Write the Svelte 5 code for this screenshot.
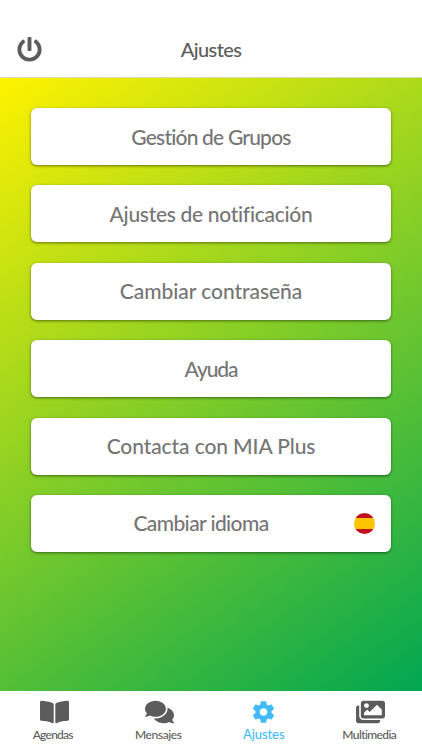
<script lang="ts">
  type Option = { label: string; tracking: number; flag?: boolean };
  type Tab = { label: string; tracking: number; icon: string; viewBox: string; active?: boolean };

  const options: Option[] = [
    { label: "Gestión de Grupos", tracking: -0.8 },
    { label: "Ajustes de notificación", tracking: -0.3 },
    { label: "Cambiar contraseña", tracking: -0.05 },
    { label: "Ayuda", tracking: -1.1 },
    { label: "Contacta con MIA Plus", tracking: -0.1 },
    { label: "Cambiar idioma", tracking: -0.6, flag: true },
  ];

  const tabs: Tab[] = [
    {
      label: "Agendas",
      tracking: -0.75,
      viewBox: "0 0 576 512",
      icon: "M542.22 32.05c-54.8 3.11-163.72 14.43-230.96 55.59-4.64 2.84-7.27 7.89-7.27 13.17v363.87c0 11.55 12.63 18.85 23.28 13.49 69.18-34.82 169.23-44.32 218.7-46.92 16.89-.89 30.02-14.43 30.02-30.66V62.75c.01-17.71-15.35-31.74-33.77-30.7zM264.73 87.64C197.5 46.48 88.58 35.17 33.78 32.05 15.36 31.01 0 45.04 0 62.75V400.6c0 16.24 13.13 29.78 30.02 30.66 49.49 2.6 149.59 12.11 218.77 46.95 10.62 5.35 23.21-1.94 23.21-13.46V100.63c0-5.29-2.62-10.14-7.27-12.99z",
    },
    {
      label: "Mensajes",
      tracking: -0.4,
      viewBox: "0 0 576 512",
      icon: "M416 192c0-88.4-93.1-160-208-160S0 103.6 0 192c0 34.3 14.1 65.9 38 92-13.4 30.2-35.5 54.2-35.8 54.5-2.2 2.3-2.8 5.7-1.5 8.7S4.8 352 8 352c36.6 0 66.9-12.3 88.7-25 32.2 15.7 70.3 25 111.3 25 114.9 0 208-71.6 208-160zm122 220c23.9-26 38-57.7 38-92 0-66.9-53.5-124.2-129.3-148.1.9 6.6 1.3 13.3 1.3 20.1 0 105.9-107.7 192-240 192-10.8 0-21.3-.8-31.7-1.9C207.8 439.6 281.8 480 368 480c41 0 79.1-9.2 111.3-25 21.8 12.7 52.1 25 88.7 25 3.2 0 6.1-1.9 7.3-4.8 1.3-2.9.7-6.3-1.5-8.7-.3-.3-22.4-24.2-35.8-54.5z",
    },
    {
      label: "Ajustes",
      tracking: -0.1,
      active: true,
      viewBox: "0 0 24 24",
      icon: "M19.43 12.98c.04-.32.07-.64.07-.98s-.03-.66-.07-.98l2.11-1.65c.19-.15.24-.42.12-.64l-2-3.46c-.12-.22-.39-.3-.61-.22l-2.49 1c-.52-.4-1.08-.73-1.69-.98l-.38-2.65C14.46 2.18 14.25 2 14 2h-4c-.25 0-.46.18-.49.42l-.38 2.65c-.61.25-1.17.59-1.69.98l-2.49-1c-.23-.09-.49 0-.61.22l-2 3.46c-.13.22-.07.49.12.64l2.11 1.65c-.04.32-.07.65-.07.98s.03.66.07.98l-2.11 1.65c-.19.15-.24.42-.12.64l2 3.46c.12.22.39.3.61.22l2.49-1c.52.4 1.08.73 1.69.98l.38 2.65c.03.24.24.42.49.42h4c.25 0 .46-.18.49-.42l.38-2.65c.61-.25 1.17-.59 1.69-.98l2.49 1c.23.09.49 0 .61-.22l2-3.46c.12-.22.07-.49-.12-.64l-2.11-1.65zM12 15.5c-1.93 0-3.5-1.57-3.5-3.5s1.57-3.5 3.5-3.5 3.5 1.57 3.5 3.5-1.57 3.5-3.5 3.5z",
    },
    {
      label: "Multimedia",
      tracking: -0.6,
      viewBox: "0 0 576 512",
      icon: "M480 416v16c0 26.51-21.49 48-48 48H48c-26.51 0-48-21.49-48-48V176c0-26.51 21.49-48 48-48h16v208c0 44.112 35.888 80 80 80h336zm96-80V80c0-26.51-21.49-48-48-48H144c-26.51 0-48 21.49-48 48v256c0 26.51 21.49 48 48 48h384c26.51 0 48-21.49 48-48zM256 128c0 26.51-21.49 48-48 48s-48-21.49-48-48 21.49-48 48-48 48 21.49 48 48zm-96 144l55.515-55.515c4.686-4.686 12.284-4.686 16.971 0L272 256l135.515-135.515c4.686-4.686 12.284-4.686 16.971 0L512 208v112H160v-48z",
    },
  ];
</script>

<div class="screen">
  <header>
    <button class="power" aria-label="Salir">
      <svg viewBox="0 0 512 512">
        <path d="M400 54.1c63 45 104 118.6 104 201.9 0 136.8-110.8 247.7-247.5 248C120 504.3 8.2 393 8 256.4 7.9 173.1 48.9 99.3 111.8 54.2c11.7-8.3 28-4.8 35 7.7L162.6 90c5.9 10.5 3.1 23.8-6.6 31-41.5 30.8-68 79.6-68 134.9-.1 92.3 74.5 168.1 168 168.1 91.6 0 168.6-74.2 168-169.1-.3-51.8-24.7-101.8-68.1-134-9.7-7.2-12.4-20.5-6.5-30.9l15.8-28.1c7-12.4 23.2-16.1 34.8-7.8zM296 264V24c0-13.3-10.7-24-24-24h-32c-13.3 0-24 10.7-24 24v240c0 13.3 10.7 24 24 24h32c13.3 0 24-10.7 24-24z" />
      </svg>
    </button>
    <h1>Ajustes</h1>
  </header>

  <main>
    {#each options as option}
      <button class="option" class:with-flag={option.flag}>
        <span style="letter-spacing: {option.tracking}px">{option.label}</span>
        {#if option.flag}
          <i class="flag"></i>
        {/if}
      </button>
    {/each}
  </main>

  <nav>
    {#each tabs as tab}
      <button class="tab" class:active={tab.active}>
        <svg viewBox={tab.viewBox}><path d={tab.icon} /></svg>
        <span style="letter-spacing: {tab.tracking}px">{tab.label}</span>
      </button>
    {/each}
  </nav>
</div>

<style>
  :global(body) {
    margin: 0;
  }
  .screen {
    display: flex;
    flex-direction: column;
    height: 750px;
    font-family: Lato, "Liberation Sans", sans-serif;
    color: #5c5c5c;
  }
  button {
    border: 0;
    padding: 0;
    background: none;
    font: inherit;
    color: inherit;
  }
  svg {
    display: block;
    fill: currentColor;
  }
  header {
    box-sizing: border-box;
    display: grid;
    grid-template-columns: 60px 1fr 60px;
    height: 78px;
    padding-top: 36px;
    border-bottom: 1px solid #d8dcb4;
    background: #fff;
  }
  .power {
    align-self: start;
    justify-self: start;
    margin: 0.5px 0 0 16.5px;
  }
  .power svg {
    width: 25px;
    height: 25px;
  }
  h1 {
    margin: 0;
    font-size: 20px;
    font-weight: 500;
    letter-spacing: -0.6px;
    line-height: 26px;
    text-align: center;
  }
  main {
    flex: 1;
    display: flex;
    flex-direction: column;
    gap: 20.4px;
    padding: 30px 31px 0;
    background: linear-gradient(145deg, #fff200, #00a651);
  }
  .option {
    display: grid;
    grid-template-columns: 37px 1fr 37px;
    align-items: center;
    height: 57px;
    border-radius: 6px;
    background: #fff;
    box-shadow: 0 1px 3px rgba(0, 0, 0, 0.5);
    color: #757575;
    font-size: 21px;
    font-weight: 500;
  }
  /* the flag pushes the label a little to the left */
  .with-flag {
    grid-template-columns: 17px 1fr 37px;
  }
  .option span {
    grid-column: 2;
    padding-bottom: 1px;
    white-space: nowrap;
  }
  .flag {
    width: 21px;
    height: 21px;
    border-radius: 50%;
    background: linear-gradient(#c1121f 25%, #ffc400 25% 75%, #c1121f 75%);
  }
  nav {
    display: grid;
    grid-template-columns: repeat(4, 1fr);
    height: 59px;
    background: #fff;
  }
  .tab {
    display: flex;
    flex-direction: column;
    align-items: center;
    padding-top: 8px;
    font-size: 12px;
    font-weight: 500;
    line-height: 20px;
  }
  .tab svg {
    width: 29px;
    height: 26px;
    margin-left: 3px;
  }
  .active {
    color: #43bbfb;
    font-size: 13px;
    line-height: 19px;
  }
  .active svg {
    margin-left: 0;
  }
</style>
